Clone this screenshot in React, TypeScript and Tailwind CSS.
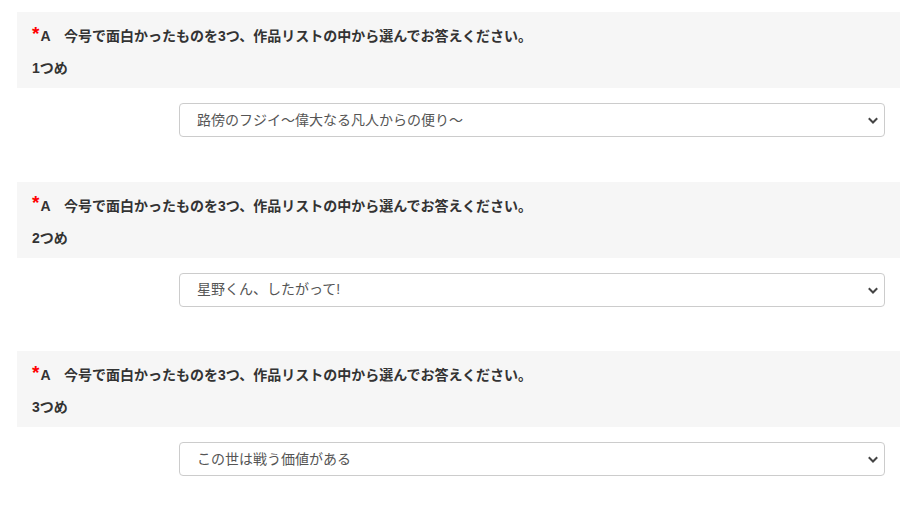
import React from "react";

const items = [
  { n: "1", v: "路傍のフジイ〜偉大なる凡人からの便り〜" },
  { n: "2", v: "星野くん、したがって!" },
  { n: "3", v: "この世は戦う価値がある" },
];

const font = { fontFamily: '"Liberation Sans", "Noto Sans CJK JP", sans-serif' };

function Section({ n, v }: { n: string; v: string }) {
  return (
    <div className="mb-[44.5px]">
      <div className="ml-[17px] mr-[22px] h-[76px] bg-[#f6f6f6] pl-[15px] pt-[12px] text-[14px] font-bold text-[#333]">
        <div className="flex h-[24px] items-center leading-[24px]">
          <span className="relative top-[-3px] mr-[1px] text-[19px] font-bold leading-none text-[#ff0000]">*</span>
          <span>A　今号で面白かったものを3つ、作品リストの中から選んでお答えください。</span>
        </div>
        <div className="mt-[8px] flex h-[24px] items-center leading-[24px]">
          <span>{n}つめ</span>
        </div>
      </div>
      <div className="mt-[15px] flex pl-[179px] pr-[37px]">
        <div className="relative h-[34px] flex-1 rounded-[4px] border border-[#cccccc] bg-white">
          <div className="flex h-full items-center pl-[17px] text-[14px] text-[#555555]">{v}</div>
          <svg
            className="absolute right-[6px] top-[13px]"
            width="10"
            height="8"
            viewBox="0 0 10 8"
            fill="none"
          >
            <path d="M1.5 2 L5 5.5 L8.5 2" stroke="#444" strokeWidth="2" strokeLinecap="square" />
          </svg>
        </div>
      </div>
    </div>
  );
}

export default function App() {
  return (
    <div className="min-h-[511px] w-[922px] bg-white pt-[12px]" style={font}>
      {items.map((it) => (
        <Section key={it.n} n={it.n} v={it.v} />
      ))}
    </div>
  );
}
